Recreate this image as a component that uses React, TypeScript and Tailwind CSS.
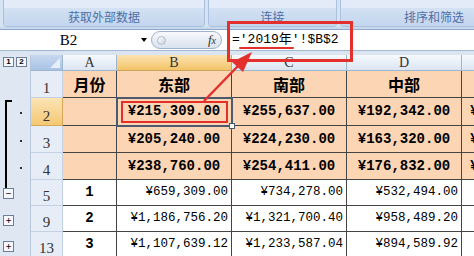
import React from 'react';

type Row = {
  n: string;
  h: string;
  kind: 'head' | 'sum' | 'detail';
  outline: 'none' | 'top' | 'mid' | 'minus' | 'plus';
  cells: string[];
  e?: string;
};

const rows: Row[] = [
  { n: '1', h: 'h-[27px]', kind: 'head', outline: 'none', cells: ['月份', '东部', '南部', '中部'] },
  { n: '2', h: 'h-[28px]', kind: 'sum', outline: 'top', cells: ['', '¥215,309.00', '¥255,637.00', '¥192,342.00'], e: '¥' },
  { n: '3', h: 'h-[27px]', kind: 'sum', outline: 'mid', cells: ['', '¥205,240.00', '¥224,230.00', '¥163,320.00'], e: '¥' },
  { n: '4', h: 'h-[27px]', kind: 'sum', outline: 'mid', cells: ['', '¥238,760.00', '¥254,411.00', '¥176,832.00'], e: '¥' },
  { n: '5', h: 'h-[26px]', kind: 'detail', outline: 'minus', cells: ['1', '¥659,309.00', '¥734,278.00', '¥532,494.00'] },
  { n: '9', h: 'h-[26px]', kind: 'detail', outline: 'plus', cells: ['2', '¥1,186,756.20', '¥1,321,700.40', '¥958,489.20'] },
  { n: '13', h: 'h-[26px]', kind: 'detail', outline: 'plus', cells: ['3', '¥1,107,639.12', '¥1,233,587.04', '¥894,589.92'] },
];

const colW = ['w-[54px]', 'w-[115px]', 'w-[115px]', 'w-[115px]'];
const serif = { fontFamily: '"Liberation Serif", serif' };
const mono = { fontFamily: '"Liberation Mono", "Noto Sans CJK SC", monospace' };
const cjk = { fontFamily: '"Noto Sans CJK SC", sans-serif' };

function OutlineBtn({ sign }: { sign: string }) {
  return <div className="w-[11px] h-[11px] border border-[#6d7f96] bg-[#f4f7fb] flex items-center justify-center text-[10px] leading-none font-bold text-black" style={serif}>
      {sign}
    </div>;
}

function Outline({ kind }: { kind: Row['outline'] }) {
  return <div className="w-[31px] shrink-0 h-full bg-[#dfe7f2] border-r border-[#b7c8de] relative flex">
      {kind === 'top' && <div className="ml-[5px] mt-[2px] w-[7px] border-l-2 border-t-2 border-black" />}
      {kind === 'mid' && <div className="ml-[5px] w-[7px] border-l-2 border-black" />}
      {kind === 'minus' && <div className="ml-[3px] flex flex-col">
          <div className="ml-[2px] h-[8px] border-l-2 border-black" />
          <OutlineBtn sign="−" />
        </div>}
      {kind === 'plus' && <div className="ml-[3px] mt-[9px]">
          <OutlineBtn sign="+" />
        </div>}
      {(kind === 'top' || kind === 'mid') && <div className="absolute left-[20px] top-1/2 w-[2px] h-[2px] bg-[#333]" />}
    </div>;
}

function DataRow({ row }: { row: Row }) {
  const peach = row.kind !== 'detail';
  const sel = row.n === '2';
  return <div className={`flex ${row.h}`}>
      <Outline kind={row.outline} />
      <div className={`w-[32px] shrink-0 flex items-end justify-center pb-[1px] text-[15px] leading-none text-[#333] border-r border-b ${sel ? 'bg-gradient-to-b from-[#fbe3b5] to-[#f5c873] border-[#d8a85a]' : 'bg-[#e6edf7] border-[#c3d1e3]'}`} style={serif}>
        {row.n}
      </div>
      {row.cells.map((c, i) => {
      const head = row.kind === 'head';
      const right = row.kind === 'detail' && i > 0;
      return <div key={i} className={`${colW[i]} shrink-0 flex items-center border-r border-b border-[#444] ${peach ? 'bg-[#fcd5b4]' : 'bg-white'} ${right ? 'justify-end pr-[3px]' : 'justify-center'}`}>
            {head ? <span className="text-[16px] font-bold text-black" style={cjk}>{c}</span> : <span className={`${row.kind === 'sum' || i === 0 ? 'font-bold text-[14px]' : 'text-[12.5px]'} text-black whitespace-nowrap`} style={mono}>
                {c}
              </span>}
          </div>;
    })}
      <div className={`w-[40px] shrink-0 flex items-center pl-[8px] border-b border-[#444] ${peach ? 'bg-[#fcd5b4]' : 'bg-white'}`}>
        <span className="text-[14px] font-bold text-black" style={mono}>{row.e ?? ''}</span>
      </div>
    </div>;
}

function Ribbon() {
  const groups = [{ label: '获取外部数据', w: 'w-[202px]' }, { label: '连接', w: 'w-[129px]' }, { label: '排序和筛选', w: 'w-[188px]' }];
  return <div className="h-[27px] flex gap-[3px] px-[3px] bg-[#d6e3f3]">
      {groups.map(g => <div key={g.label} className={`${g.w} shrink-0 flex flex-col rounded-b-[4px] border border-t-0 border-[#a9c0de] overflow-hidden`}>
          <div className="h-[8px] bg-[#e2ebf7]" />
          <div className="flex-1 flex items-center justify-center bg-gradient-to-b from-[#d3e1f3] to-[#c3d6ee] text-[12px] leading-none text-[#4d6fa6]" style={cjk}>
            {g.label}
          </div>
        </div>)}
    </div>;
}

function FormulaBar() {
  return <div className="h-[21px] flex bg-white border-b border-[#a3b8d3]">
      <div className="w-[137px] shrink-0 flex items-center justify-center text-[15px] text-black" style={serif}>
        B2
      </div>
      <div className="w-[14px] shrink-0 flex items-center justify-center">
        <div className="w-0 h-0 border-l-[3px] border-r-[3px] border-t-[4px] border-l-transparent border-r-transparent border-t-black" />
      </div>
      <div className="w-[71px] shrink-0 my-[1px] rounded-full border border-[#9fb2c9] bg-gradient-to-b from-[#f7f9fc] to-[#d9e2ee] flex items-center justify-between pl-[5px] pr-[5px]">
        <div className="w-[9px] h-[9px] rounded-full border border-[#b0bccb] bg-gradient-to-br from-white to-[#c9d3df]" />
        <span className="text-[13px] italic text-[#333]" style={serif}>f<span className="text-[10px]">x</span></span>
      </div>
      <div className="flex-1 flex items-center pl-[10px] text-[13px] text-black whitespace-nowrap" style={mono}>
        ='2019年'!$B$2
      </div>
    </div>;
}

function ColHeader() {
  const hdr = ['A', 'B', 'C', 'D'];
  return <div className="h-[16px] flex">
      <div className="w-[31px] shrink-0 bg-[#dfe7f2] border-r border-[#b7c8de] flex items-start gap-[2px] pl-[3px] pt-[2px]">
        {['1', '2'].map(s => <div key={s} className="w-[11px] h-[10px] border border-[#6d7f96] bg-[#f4f7fb] flex items-center justify-center text-[8px] font-bold leading-none text-black" style={{
        fontFamily: '"Liberation Sans", sans-serif'
      }}>
            {s}
          </div>)}
      </div>
      <div className="w-[32px] shrink-0 flex items-end justify-end pr-[2px] pb-[2px] bg-gradient-to-b from-[#c6d8ef] to-[#a9c3e5] border-r border-b border-[#9eb6ce]">
        <svg width="10" height="10" viewBox="0 0 10 10">
          <polygon points="10,0 10,10 0,10" fill="#e6eef9" />
        </svg>
      </div>
      {hdr.map((h, i) => <div key={h} className={`${colW[i]} shrink-0 flex items-center justify-center text-[14px] leading-none border-r border-b ${h === 'B' ? 'bg-gradient-to-b from-[#fbe2b0] to-[#f3c467] border-[#c9a55e]' : 'bg-gradient-to-b from-[#f6f9fd] to-[#dbe5f2] border-[#9eb6ce]'} text-[#333]`} style={serif}>
          {h}
        </div>)}
      <div className="w-[40px] shrink-0 bg-gradient-to-b from-[#f6f9fd] to-[#dbe5f2] border-b border-[#9eb6ce]" />
    </div>;
}

export default function App() {
  return <div className="w-[474px] h-[256px] overflow-hidden relative bg-white">
      <Ribbon />
      <div className="h-[3px] bg-[#c9d9ec] border-b border-[#8fa9cc]" />
      <FormulaBar />
      <div className="h-[4px] bg-[#dbe5f1]" />
      <ColHeader />
      {rows.map(r => <DataRow key={r.n} row={r} />)}

      {/* selection + fill handle on B2 */}
      <div className="absolute left-[116px] top-[97px] w-[117px] h-[30px] border-2 border-[#4b5a6e]" />
      <div className="absolute left-[229px] top-[123px] w-[6px] h-[6px] bg-white border border-[#4b5a6e]" />

      {/* annotations */}
      <div className="absolute left-[121px] top-[101px] w-[107px] h-[22px] border-2 border-[#e3302c]" />
      <div className="absolute left-[227px] top-[21px] w-[126px] h-[41px] border-[3px] border-[#e3302c]" />
      <div className="absolute left-[239px] top-[47px] w-[55px] h-[2px] bg-[#e3302c] rounded-full" />
      <svg className="absolute left-0 top-0" width="474" height="256" viewBox="0 0 474 256">
        <line x1="204" y1="101" x2="238" y2="66" stroke="#e3302c" strokeWidth="2.5" />
        <polygon points="252,52 232,62 243,72" fill="#e3302c" />
      </svg>
    </div>;
}
